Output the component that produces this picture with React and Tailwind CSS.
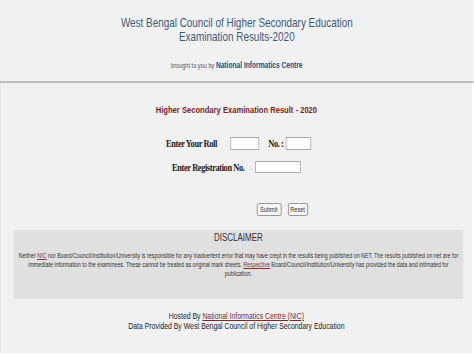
import React from "react";

function Label({ children, className = "" }) {
  return (
    <span className={"whitespace-nowrap font-['Liberation_Serif',serif] font-bold text-[10.5px] leading-[13px] tracking-[-0.5px] text-[#222] " + className}>
      {children}
    </span>
  );
}

function Colon({ className = "" }) {
  return <span className={"text-[8px] leading-[13px] text-[#b0b0b0] " + className}>:</span>;
}

function Field({ className = "" }) {
  return <input type="text" className={"bg-white border border-[#a9a9a9] outline-none " + className} />;
}

export default function App() {
  return (
    <div className="w-[474px] h-[355px] overflow-hidden bg-white">
      <div className="w-[592px] h-[355px] origin-top-left scale-x-[0.8] font-['Liberation_Sans',Arial,sans-serif]">
        <header className="h-[83px] bg-[#f1f1f1] border-b-2 border-[#bcbcbc] pt-[16px] text-center">
          <h1 className="text-[12.4px] leading-[14px] text-[#3b5b7d]">
            West Bengal Council of Higher Secondary Education
            <br />
            Examination Results-2020
          </h1>
          <p className="mt-[16px] text-[7px] leading-[10px] text-[#555]">
            brought to you by{" "}
            <b className="text-[8.3px] text-[#23507f]">National Informatics Centre</b>
          </p>
        </header>

        <main className="w-[590px] h-[270px] bg-[#f1f1f1] border-l border-[#e4e4e4] pt-[21px]">
          <h2 className="text-center text-[9.5px] leading-[12px] font-bold text-[#7d1d1d]">
            Higher Secondary Examination Result - 2020
          </h2>

          <form className="mt-[21px]">
            <div className="flex items-center justify-center pl-[6px] h-[13px]">
              <Label>Enter Your Roll</Label>
              <Colon className="ml-[12px]" />
              <Field className="ml-[3px] w-[36px] h-[13px]" />
              <Label className="ml-[11px]">No. :</Label>
              <Field className="ml-[3px] w-[32px] h-[13px]" />
            </div>
            <div className="mt-[11px] flex items-center justify-center h-[12px]">
              <Label>Enter Registration No.</Label>
              <Colon className="ml-[6px]" />
              <Field className="ml-[5px] w-[57px] h-[12px]" />
            </div>
            <div className="mt-[30px] flex justify-center gap-[8px] pl-[114px]">
              <button type="button" className="w-[31px] h-[13px] text-[7px] leading-none text-[#333] bg-[#f7f7f7] border border-[#8f8f8f] rounded-[2px]">
                Submit
              </button>
              <button type="button" className="w-[25px] h-[13px] text-[7px] leading-none text-[#333] bg-[#f7f7f7] border border-[#8f8f8f] rounded-[2px]">
                Reset
              </button>
            </div>
          </form>

          <section className="mt-[14px] ml-[16px] w-[562px] h-[69px] bg-[#e0e0e0] pt-[2px] px-[3px] text-center text-[#333]">
            <h3 className="text-[10px] leading-[12px]">DISCLAIMER</h3>
            <p className="mt-[7px] text-[6.7px] leading-[9px]">
              Neither <a className="underline text-[#8b3030]">NIC</a> nor Board/Council/Institution/University is responsible for any inadvertent error that may have crept in the results being published on NET. The results published on net are for immediate information to the examinees. These cannot be treated as original mark sheets.{" "}
              <a className="underline text-[#8b3030]">Respective</a> Board/Council/Institution/University has provided the data and intimated for publication.
            </p>
          </section>

          <footer className="mt-[12px] text-center text-[8.6px] leading-[10px] text-[#222]">
            Hosted By <a className="underline text-[#7a2a2a]">National Informatics Centre (NIC)</a>
            <br />
            Data Provided By West Bengal Council of Higher Secondary Education
          </footer>
        </main>
      </div>
    </div>
  );
}
